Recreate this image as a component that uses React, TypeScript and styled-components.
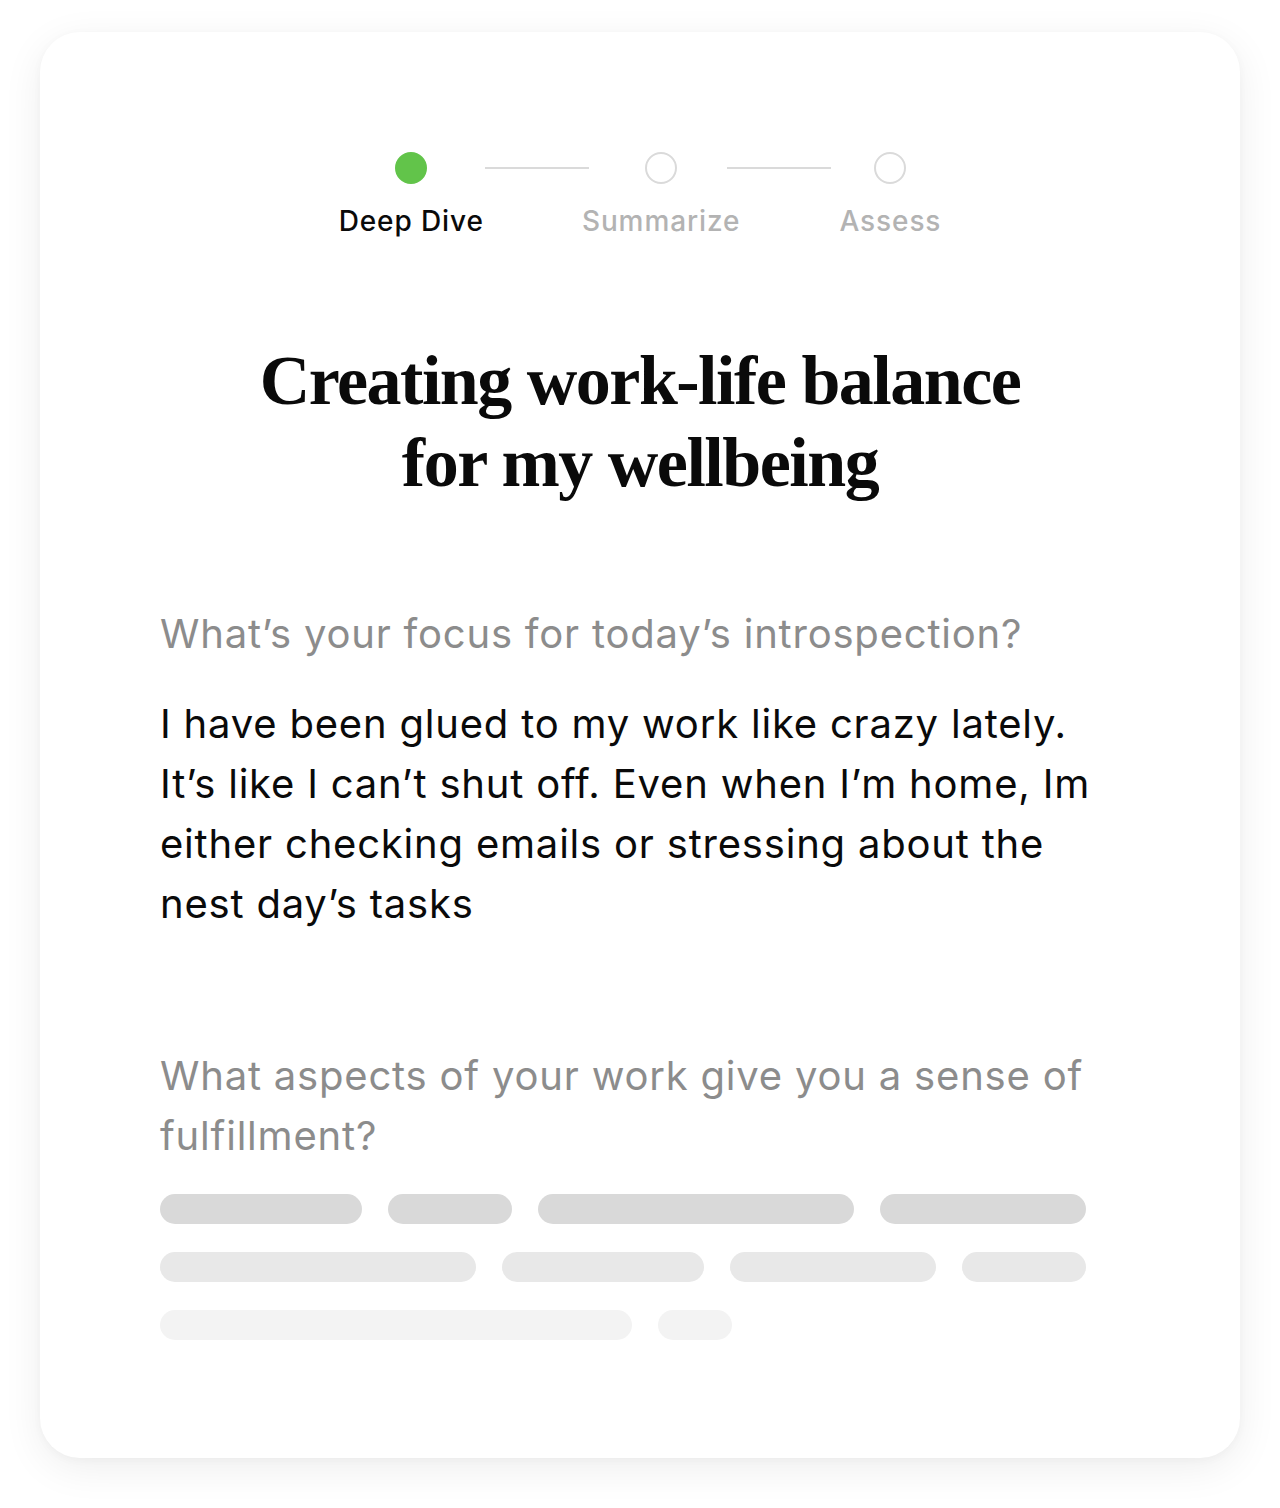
import React, { FC } from "react";
import styled, { createGlobalStyle } from "styled-components";

const colors = {
  black: "#0a0a0a",
  green: "#62c44a",
  line: "#dadada",
  label: "#b3b3b3",
  question: "#8c8c8c",
};

const steps = [
  { name: "Deep Dive", done: true },
  { name: "Summarize", done: false },
  { name: "Assess", done: false },
];

const connectors = [
  { left: 1, right: -7 },
  { left: -13, right: 8 },
];

const skeletonRows = [
  { tone: "#d9d9d9", bars: [202, 124, 316, 206] },
  { tone: "#e8e8e8", bars: [316, 202, 206, 124] },
  { tone: "#f3f3f3", bars: [472, 74] },
];

const GlobalStyle = createGlobalStyle`
  * {
    box-sizing: border-box;
  }

  body {
    margin: 0;
    background: #ffffff;
    font-family: Inter, "Noto Sans", sans-serif;
  }
`;

const App: FC = () => {
  return (
    <>
      <GlobalStyle />
      <Page>
        <Card>
          <Stepper>
            {steps.map((step, idx) => (
              <React.Fragment key={step.name}>
                <Step>
                  <Dot done={step.done} />
                  <StepLabel active={step.done}>{step.name}</StepLabel>
                </Step>
                {idx < connectors.length && (
                  <Connector
                    offsetLeft={connectors[idx].left}
                    offsetRight={connectors[idx].right}
                  />
                )}
              </React.Fragment>
            ))}
          </Stepper>

          <Title>
            Creating work-life balance
            <br />
            for my wellbeing
          </Title>

          <Content>
            <Question>What’s your focus for today’s introspection?</Question>
            <Answer>
              I have been glued to my work like crazy lately. It’s like I can’t
              shut off. Even when I’m home, Im either checking emails or
              stressing about the nest day’s tasks
            </Answer>

            <Question spaced>
              What aspects of your work give you a sense of fulfillment?
            </Question>
            <Skeleton>
              {skeletonRows.map((row, r) => (
                <SkeletonRow key={r}>
                  {row.bars.map((w, b) => (
                    <Bar key={b} tone={row.tone} style={{ width: w }} />
                  ))}
                </SkeletonRow>
              ))}
            </Skeleton>
          </Content>
        </Card>
      </Page>
    </>
  );
};

const Page = styled.div`
  padding: 32px 40px 50px;
`;

const Card = styled.div`
  width: 1200px;
  height: 1426px;
  background: #ffffff;
  border-radius: 40px;
  box-shadow: 0 10px 40px rgba(0, 0, 0, 0.07), 0 2px 10px rgba(0, 0, 0, 0.03);
  padding: 120px 120px 0;
  display: flex;
  flex-direction: column;
  align-items: center;
`;

const Stepper = styled.div`
  display: flex;
  justify-content: center;
  align-items: flex-start;
`;

const Step = styled.div`
  display: flex;
  flex-direction: column;
  align-items: center;
  gap: 19px;
`;

const Dot = styled.span<{ done: boolean }>`
  width: 32px;
  height: 32px;
  border-radius: 50%;
  background: ${(p) => (p.done ? colors.green : "#ffffff")};
  border: 2px solid ${(p) => (p.done ? colors.green : colors.line)};
`;

const StepLabel = styled.span<{ active: boolean }>`
  font-size: 28px;
  line-height: 36px;
  font-weight: 500;
  letter-spacing: 0.9px;
  color: ${(p) => (p.active ? colors.black : colors.label)};
`;

const Connector = styled.span<{ offsetLeft: number; offsetRight: number }>`
  flex: none;
  width: 104px;
  height: 2px;
  margin-top: 15px;
  margin-left: ${(p) => p.offsetLeft}px;
  margin-right: ${(p) => p.offsetRight}px;
  background: ${colors.line};
`;

const Title = styled.h1`
  margin: 101px 0 0;
  font-family: "Liberation Serif", "DejaVu Serif", serif;
  font-weight: 700;
  font-size: 70px;
  line-height: 82px;
  letter-spacing: -1.5px;
  text-align: center;
  color: ${colors.black};
`;

const Content = styled.div`
  align-self: stretch;
  margin-top: 100px;
`;

const Question = styled.p<{ spaced?: boolean }>`
  margin: ${(p) => (p.spaced ? "112px" : "0")} 0 0;
  font-size: 40px;
  line-height: 60px;
  letter-spacing: 0.8px;
  color: ${colors.question};
`;

const Answer = styled.p`
  margin: 30px 0 0;
  font-size: 40px;
  line-height: 60px;
  letter-spacing: 0.8px;
  color: ${colors.black};
`;

const Skeleton = styled.div`
  margin-top: 28px;
  display: flex;
  flex-direction: column;
  gap: 28px;
`;

const SkeletonRow = styled.div`
  display: flex;
  gap: 26px;
`;

const Bar = styled.span<{ tone: string }>`
  height: 30px;
  border-radius: 15px;
  background: ${(p) => p.tone};
`;

export default App;
